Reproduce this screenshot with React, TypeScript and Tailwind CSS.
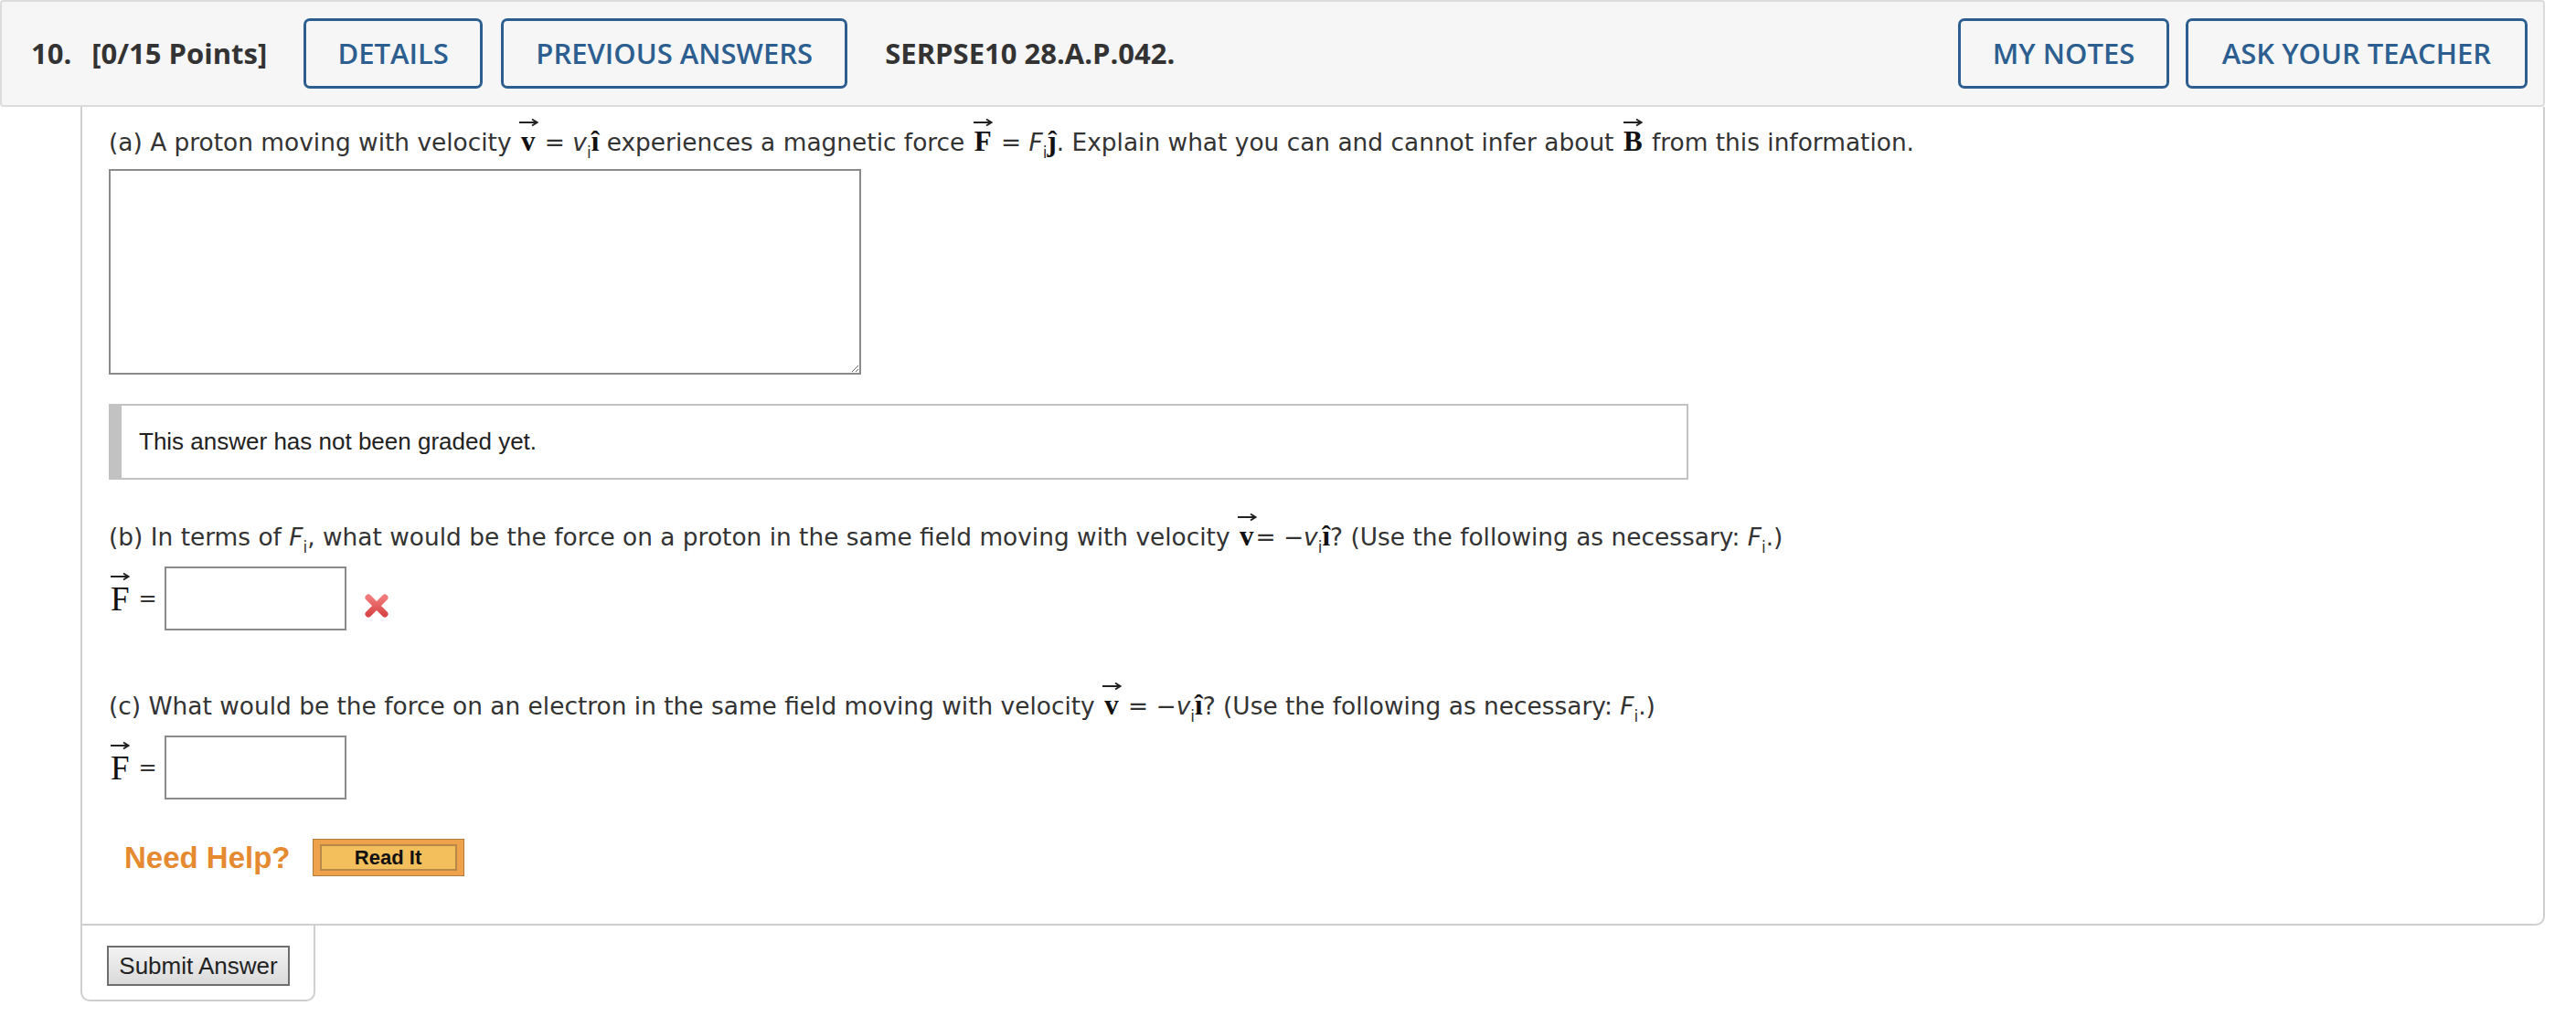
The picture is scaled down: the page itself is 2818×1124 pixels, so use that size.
import React from "react";

const serif = "font-['Liberation_Serif','Times_New_Roman',serif]";

// vector letter with an arrow drawn over it
function Vec({ ch, size = "text-[31px]", top = "top-[-10px]" }: { ch: string; size?: string; top?: string }) {
  return (
    <span className={`relative inline-block ${serif} ${size} font-bold leading-none text-[#111] mx-[2px]`}>
      {ch}
      <svg
        className={`absolute left-1/2 -translate-x-1/2 ${top}`}
        width="22"
        height="10"
        viewBox="0 0 22 10"
      >
        <path d="M1 5H20M15 1.5L20.5 5L15 8.5" stroke="#222" strokeWidth="2" fill="none" />
      </svg>
    </span>
  );
}

function Unit({ ch }: { ch: string }) {
  return <span className={`${serif} text-[31px] font-bold leading-none text-[#111]`}>{ch}</span>;
}

function Sub({ base }: { base: string }) {
  return (
    <>
      <span className="italic">{base}</span>
      <span className="relative top-[8px] text-[17px] leading-none">i</span>
    </>
  );
}

function HeaderButton({ label, w }: { label: string; w: string }) {
  return (
    <button
      className={`${w} h-[77px] shrink-0 rounded-[7px] border-[3px] border-[#2c5f90] text-[31px] font-semibold text-[#2c5f90] bg-[#f6f6f6]`}
    >
      {label}
    </button>
  );
}

function RedX() {
  return (
    <svg width="28" height="28" viewBox="0 0 28 28" className="ml-[19px] mt-[16px]">
      <defs>
        <linearGradient id="xg" x1="0" y1="0" x2="0" y2="1">
          <stop offset="0" stopColor="#f07a7a" />
          <stop offset="1" stopColor="#d94848" />
        </linearGradient>
      </defs>
      <path d="M5 5L23 23M23 5L5 23" stroke="url(#xg)" strokeWidth="7" strokeLinecap="round" />
    </svg>
  );
}

function ForceRow({ wrong }: { wrong?: boolean }) {
  return (
    <div className="flex items-center h-[70px]">
      <Vec ch="F" size="text-[37px] font-normal" top="top-[-11px]" />
      <span className="ml-[8px] mr-[8px] text-[24px] text-[#333]">=</span>
      <input className="w-[199px] h-[70px] border-2 border-[#8a8a8a] bg-white" />
      {wrong && <RedX />}
    </div>
  );
}

export default function App() {
  return (
    <div className="w-[2818px] h-[1124px] bg-white font-['DejaVu_Sans','Verdana',sans-serif] text-[26.4px] text-[#333]">
      {/* header */}
      <div className="w-[2784px] h-[117px] flex items-center pl-[32px] pr-[17px] bg-[#f6f6f6] border-2 border-[#dcdcdc] rounded-[4px] font-['Open_Sans',sans-serif] text-[#333]">
        <span className="text-[31px] font-bold">10.</span>
        <span className="ml-[22px] text-[31px] font-bold">[0/15 Points]</span>
        <div className="ml-[40px] flex gap-[20px]">
          <HeaderButton label="DETAILS" w="w-[196px]" />
          <HeaderButton label="PREVIOUS ANSWERS" w="w-[379px]" />
        </div>
        <span className="ml-[41px] text-[31px] font-bold">SERPSE10 28.A.P.042.</span>
        <div className="ml-auto flex gap-[18px]">
          <HeaderButton label="MY NOTES" w="w-[231px]" />
          <HeaderButton label="ASK YOUR TEACHER" w="w-[374px]" />
        </div>
      </div>

      {/* question body */}
      <div className="ml-[88px] w-[2696px] border-x-2 border-b-2 border-[#cfcfcf] rounded-br-[10px] pl-[29px] pt-[21px] pb-[52px]">
        <p className="leading-[36px] whitespace-nowrap">
          (a) A proton moving with velocity <Vec ch="v" /> = <Sub base="v" />
          <Unit ch="î" /> experiences a magnetic force <Vec ch="F" /> = <Sub base="F" />
          <Unit ch="ĵ" />. Explain what you can and cannot infer about <Vec ch="B" /> from this information.
        </p>
        <textarea className="block mt-[11px] w-[823px] h-[225px] border-2 border-[#8a8a8a] bg-white resize" />

        <div className="mt-[32px] w-[1728px] h-[83px] flex items-center border-2 border-l-[14px] border-[#c2c2c2] pl-[19px] font-['Liberation_Sans','Arial',sans-serif] text-[26px] text-[#222]">
          This answer has not been graded yet.
        </div>

        <p className="mt-[45px] leading-[36px] whitespace-nowrap">
          (b) In terms of <Sub base="F" />, what would be the force on a proton in the same field moving with velocity{" "}
          <Vec ch="v" />= −<Sub base="v" />
          <Unit ch="î" />? (Use the following as necessary: <Sub base="F" />.)
        </p>
        <div className="mt-[14px]">
          <ForceRow wrong />
        </div>

        <p className="mt-[65px] leading-[36px] whitespace-nowrap">
          (c) What would be the force on an electron in the same field moving with velocity <Vec ch="v" /> = −
          <Sub base="v" />
          <Unit ch="î" />? (Use the following as necessary: <Sub base="F" />.)
        </p>
        <div className="mt-[14px]">
          <ForceRow />
        </div>

        <div className="mt-[43px] flex items-center h-[41px] pl-[17px]">
          <span className="font-['Liberation_Sans','Arial',sans-serif] font-bold text-[33px] text-[#e58a30]">
            Need Help?
          </span>
          <button className="ml-[24px] w-[166px] h-[41px] p-[5px_7px] bg-[#eea24c] border border-[#b67a3a]">
            <span className="flex items-center justify-center w-full h-full bg-[#f2bf5c] border-2 border-[#b8884a] font-['Liberation_Sans','Arial',sans-serif] font-bold text-[22px] text-[#111] leading-none">
              Read It
            </span>
          </button>
        </div>
      </div>

      {/* submit tab */}
      <div className="ml-[88px] w-[257px] h-[83px] border-x-2 border-b-2 border-[#cfcfcf] rounded-b-[10px] pl-[27px] pt-[22px]">
        <button className="w-[200px] h-[44px] border-2 border-[#6e6e6e] bg-gradient-to-b from-[#f3f3f3] to-[#dadada] font-['Liberation_Sans','Arial',sans-serif] text-[26px] text-[#222]">
          Submit Answer
        </button>
      </div>
    </div>
  );
}
